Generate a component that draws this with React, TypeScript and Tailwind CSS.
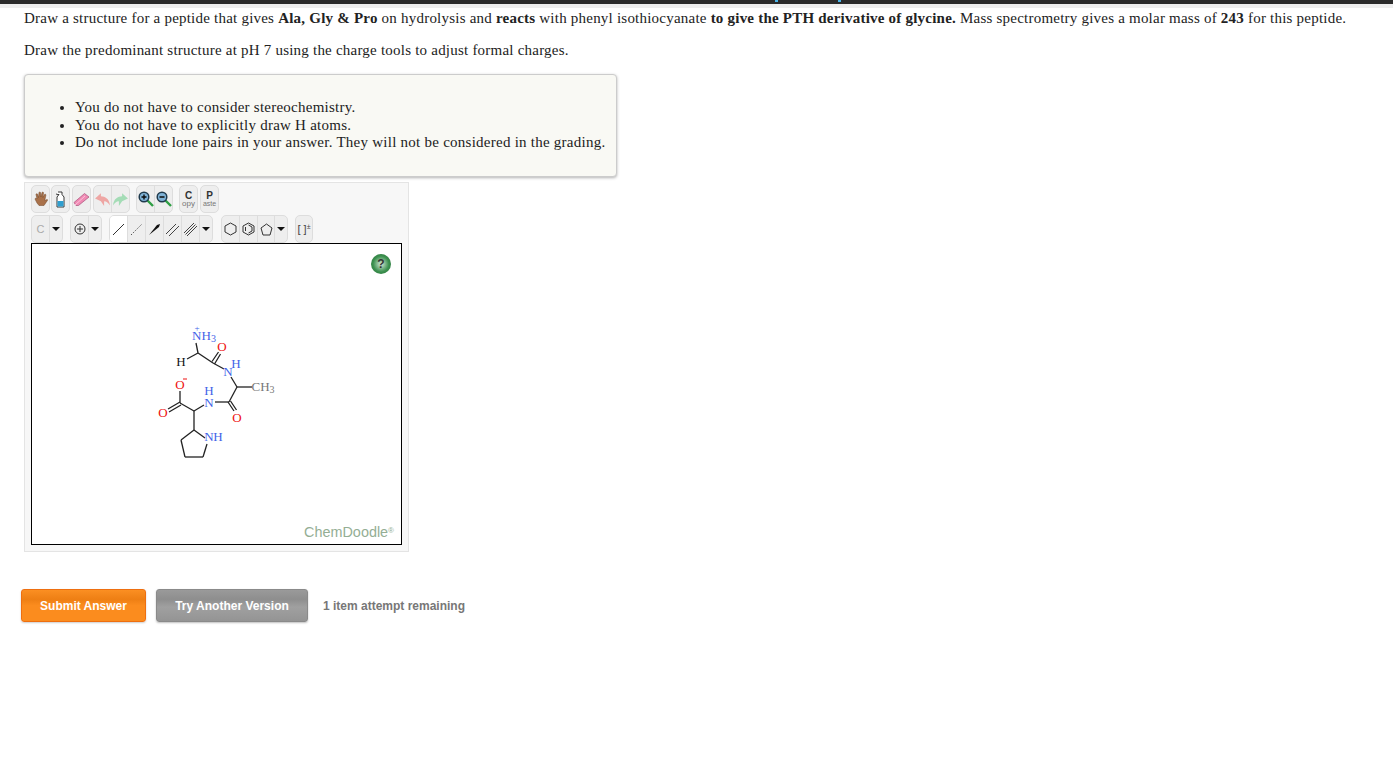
const btn = "flex h-full items-center justify-center border-r border-[#ddd] last:border-r-0";

function Group({ className, children }: { className?: string; children: React.ReactNode }) {
  return (
    <div className={`flex h-[28px] overflow-hidden rounded-[5px] border border-[#ddd] bg-[#eeeeee] ${className ?? ""}`}>
      {children}
    </div>
  );
}

function Caret({ w = 12 }: { w?: number }) {
  return (
    <div className={btn} style={{ width: w }}>
      <svg width="8" height="4" viewBox="0 0 8 4"><path d="M0 0h8L4 4z" fill="#111" /></svg>
    </div>
  );
}

function Icon({ w = 18, children, active }: { w?: number; children: React.ReactNode; active?: boolean }) {
  return (
    <div className={`${btn} ${active ? "bg-white" : ""}`} style={{ width: w }}>
      {children}
    </div>
  );
}

function Molecule() {
  const bonds = [
    "M198 353L196 343", "M198 353L187 359", "M198 353L213 363", "M213 363L224 369",
    "M231 377L237 387", "M237 387L252 387", "M237 387L229 402", "M229 402L215 402",
    "M204 405L194 411", "M194 411L180 403", "M180 403L180 391", "M194 411L194 430",
    "M194 430L205 438", "M207 444L203 457", "M203 457L185 457", "M185 457L181 440", "M181 440L194 430",
  ];
  const blue = "#3f63e8";
  return (
    <svg width="140" height="145" viewBox="150 320 140 145" className="absolute left-[118px] top-[76px]">
      <g stroke="#222" strokeWidth="1.3" fill="none">
        {bonds.map((d) => <path key={d} d={d} />)}
        <path d="M212 361.500L218.500 352M214.500 364L220.500 354" />
        <path d="M228 402L234 411M230.500 401L236.500 410" />
        <path d="M180 402L168 409M181 405L169 412" />
      </g>
      <g fontFamily="'Liberation Serif', serif" fontSize="13" textAnchor="middle">
        <text x="204" y="340" fill={blue}>NH<tspan fontSize="10" dy="2">3</tspan></text>
        <text x="197" y="331" fill={blue} fontSize="9">+</text>
        <text x="181" y="366" fill="#111">H</text>
        <text x="222" y="351" fill="#ee1111">O</text>
        <text x="228" y="376" fill={blue}>N</text>
        <text x="236" y="368" fill={blue}>H</text>
        <text x="263" y="391" fill="#777">CH<tspan fontSize="10" dy="2">3</tspan></text>
        <text x="237" y="422" fill="#ee1111">O</text>
        <text x="209" y="407" fill={blue}>N</text>
        <text x="209" y="395" fill={blue}>H</text>
        <text x="180" y="389" fill="#ee1111">O</text>
        <path d="M183 379h4" stroke="#ee1111" />
        <text x="163" y="417" fill="#ee1111">O</text>
        <text x="209" y="441" fill={blue}>N</text>
        <text x="218" y="441" fill={blue}>H</text>
      </g>
    </svg>
  );
}

function Zoom({ d }: { d: string }) {
  return (
    <svg width="16" height="16" viewBox="0 0 16 16">
      <path d="M9.500 9.500l5.500 5.500" stroke="#2f9e44" strokeWidth="2.400" />
      <circle cx="6" cy="6" r="4.800" fill="#7fb2d6" stroke="#1f3a4d" strokeWidth="1.500" />
      <path d={d} stroke="#0b0b0b" strokeWidth="1.400" />
    </svg>
  );
}

function Toolbar() {
  const sans = "font-['Liberation_Sans',sans-serif]";
  return (
    <div className="flex flex-col">
      <div className="flex">
        <Group>
          <Icon w={17}>
            <svg width="14" height="16" viewBox="0 0 14 16"><path d="M3 8L2 3.500a.8.800 0 0 1 1.500-.400L4.500 6.500 5 1.500a.8.800 0 0 1 1.500 0L7 6l1-4.500a.8.800 0 0 1 1.500.300L9 6.500l1.500-3a.8.800 0 0 1 1.400.600L10.800 9.500 13 8.500c.6 0 .8.700.4 1L10 14.500H5L3 12 1 8c0-1 1.300-1 2 0z" fill="#a9714a" stroke="#6e4527" strokeWidth=".5" /></svg>
          </Icon>
        </Group>
        <Group className="ml-px">
          <Icon w={17}>
            <svg width="11" height="17" viewBox="0 0 11 17"><path d="M3 1h4v2.500L9 6v10H2V6l2-2.500H3L1 3" fill="#fff" stroke="#222" strokeWidth=".9" /><path d="M2.500 10h6v5.500h-6z" fill="#2f9fd0" /></svg>
          </Icon>
        </Group>
        <Group className="ml-[2px]">
          <Icon w={17}>
            <svg width="17" height="15" viewBox="0 0 17 15"><path d="M1 10.500L11.500 1.500 16 5 5.500 13.500H3z" fill="#f08ab4" stroke="#a8527b" strokeWidth=".7" /><path d="M2 13L12 4" stroke="#fbc2da" /></svg>
          </Icon>
        </Group>
        <Group className="ml-[2px]">
          <Icon w={18}>
            <svg width="17" height="16" viewBox="0 0 16 15"><path d="M1 7l5.500-5v3c4 0 8 2.500 8.500 8.500-1.500-2.500-3-4-5.500-4L9.500 14 6.500 9.500H6.500z" fill="#eea6a4" /></svg>
          </Icon>
          <Icon w={17}>
            <svg width="17" height="16" viewBox="0 0 16 15"><path d="M15 7L9.500 2v3c-4 0-8 2.500-8.500 8.500C2.500 11 4 9.500 6.500 9.500L6.500 14l3-4.500z" fill="#a4dcb6" /></svg>
          </Icon>
        </Group>
        <Group className="ml-[6px]">
          <Icon w={18}><Zoom d="M3.500 6h5M6 3.500v5" /></Icon>
          <Icon w={17}><Zoom d="M3.500 6h5" /></Icon>
        </Group>
        <Group className="ml-[6px]">
          <Icon w={17}>
            <span className={`flex flex-col items-center text-[8px] leading-[7px] text-[#777] ${sans}`}>
              <b className="text-[10px] leading-[9px] text-[#333]">C</b>opy
            </span>
          </Icon>
        </Group>
        <Group className="ml-[2px]">
          <Icon w={17}>
            <span className={`flex flex-col items-center text-[7px] leading-[7px] text-[#777] ${sans}`}>
              <b className="text-[10px] leading-[9px] text-[#333]">P</b>aste
            </span>
          </Icon>
        </Group>
      </div>
      <div className="mt-[2px] flex h-[28px]">
        <Group>
          <Icon w={18}><span className={`text-[11px] text-[#aaa] ${sans}`}>C</span></Icon>
          <Caret />
        </Group>
        <Group className="ml-[7px]">
          <Icon w={18}>
            <svg width="12" height="12" viewBox="0 0 12 12" fill="none" stroke="#333"><circle cx="6" cy="6" r="5" /><path d="M3 6h6M6 3v6" /></svg>
          </Icon>
          <Caret />
        </Group>
        <Group className="ml-[7px]">
          <Icon w={18} active>
            <svg width="13" height="13" viewBox="0 0 13 13"><path d="M1 12L12 1" stroke="#333" /></svg>
          </Icon>
          <Icon w={18}>
            <svg width="13" height="13" viewBox="0 0 13 13"><path d="M1 12L12 1" stroke="#555" strokeDasharray="1.500 1.500" /></svg>
          </Icon>
          <Icon w={18}>
            <svg width="13" height="13" viewBox="0 0 13 13"><path d="M1 12L9 2l3-1-1 3z" fill="#111" /></svg>
          </Icon>
          <Icon w={18}>
            <svg width="13" height="13" viewBox="0 0 13 13"><path d="M0 11L10 1M3 13L13 3" stroke="#444" /></svg>
          </Icon>
          <Icon w={18}>
            <svg width="13" height="13" viewBox="0 0 13 13"><path d="M0 10L10 0M1.500 11.500L11.500 1.500M3 13L13 3" stroke="#444" /></svg>
          </Icon>
          <Caret />
        </Group>
        <Group className="ml-[8px]">
          <Icon w={18}>
            <svg width="13" height="14" viewBox="0 0 13 14" fill="none" stroke="#333"><path d="M6.500 1l5.500 3v6l-5.500 3L1 10V4z" /></svg>
          </Icon>
          <Icon w={18}>
            <svg width="13" height="14" viewBox="0 0 13 14" fill="none" stroke="#333"><path d="M6.500 1l5.500 3v6l-5.500 3L1 10V4z" /><path d="M6.500 3l3.500 2v4l-3.500 2M3.500 9V5" /></svg>
          </Icon>
          <Icon w={17}>
            <svg width="13" height="13" viewBox="0 0 13 13" fill="none" stroke="#333"><path d="M6.500 1l5.500 4-2 7H3L1 5z" /></svg>
          </Icon>
          <Caret />
        </Group>
        <Group className="ml-[7px]">
          <Icon w={16}>
            <span className={`text-[11px] leading-none text-[#444] ${sans}`}>[ ]<sup className="text-[7px]">±</sup></span>
          </Icon>
        </Group>
      </div>
    </div>
  );
}

export default function App() {
  return (
    <div className="relative h-[766px] bg-white font-['Liberation_Serif',serif] text-[#222]">
      <div className="relative h-[4px] bg-[#2b2b2b]">
        <span className="absolute left-[775px] top-0 h-[2px] w-[3px] bg-[#4ab4e8]" />
        <span className="absolute left-[838px] top-0 h-[2px] w-[3px] bg-[#4ab4e8]" />
      </div>
      <div className="h-[4px] bg-[#eeeeee]" />

      <div className="pl-[24px]">
        <p className="mt-[1px] h-[18px] whitespace-nowrap text-[15px] leading-[18px] tracking-[0.22px]">
          Draw a structure for a peptide that gives <b>Ala, Gly &amp; Pro</b> on hydrolysis and <b>reacts</b> with phenyl isothiocyanate <b>to give the PTH derivative of glycine.</b> Mass spectrometry gives a molar mass of <b>243</b> for this peptide.
        </p>
        <p className="mt-[14px] h-[18px] whitespace-nowrap text-[15px] leading-[18px] tracking-[0.22px]">
          Draw the predominant structure at pH 7 using the charge tools to adjust formal charges.
        </p>

        <div className="mt-[15px] h-[103px] w-[593px] rounded-[4px] border border-[#ccc] bg-[#f9f9f4] pt-[24px] shadow-[0_1px_3px_rgba(0,0,0,0.3)]">
          <ul className="list-disc pl-[50px] text-[15px] leading-[17.5px] tracking-[0.25px]">
            <li>You do not have to consider stereochemistry.</li>
            <li>You do not have to explicitly draw H atoms.</li>
            <li className="whitespace-nowrap">Do not include lone pairs in your answer. They will not be considered in the grading.</li>
          </ul>
        </div>

        <div className="mt-[5px] flex h-[370px] w-[385px] flex-col border border-[#e4e4e4] bg-[#f7f7f7] px-[6px] pt-[2px]">
          <Toolbar />
          <div className="relative h-[302px] w-[371px] border border-black bg-white">
            <div className="absolute right-[10px] top-[10px] flex h-[20px] w-[20px] items-center justify-center rounded-full bg-[radial-gradient(circle,#d5e8d8_0%,#3d9150_55%,#1f6b30_100%)] font-['Liberation_Sans',sans-serif] text-[12px] font-bold text-[#333]">
              ?
            </div>
            <Molecule />
            <span className="absolute bottom-[4px] right-[7px] font-['Liberation_Sans',sans-serif] text-[14.4px] leading-[16px] text-[#94ae94]">
              ChemDoodle<sup className="text-[8px]">®</sup>
            </span>
          </div>
        </div>
      </div>

      <div className="ml-[21px] mt-[37px] flex h-[33px] items-center font-['Liberation_Sans',sans-serif] text-[12px] font-bold">
        <button className="h-[33px] w-[125px] rounded-[3px] border border-[#ee6f10] bg-[linear-gradient(#fb8f22_0%,#ee7f14_30%,#fb8c1e_50%,#fb8c1e_100%)] text-white shadow-[0_1px_2px_rgba(0,0,0,0.2)]">
          Submit Answer
        </button>
        <button className="ml-[10px] h-[33px] w-[152px] rounded-[3px] border border-[#8a8a8a] bg-[linear-gradient(#9a9a9a_0%,#8e8e8e_30%,#a0a0a0_55%,#949494_100%)] text-white shadow-[0_1px_2px_rgba(0,0,0,0.25)]">
          Try Another Version
        </button>
        <span className="ml-[15px] text-[#777]">1 item attempt remaining</span>
      </div>
    </div>
  );
}
